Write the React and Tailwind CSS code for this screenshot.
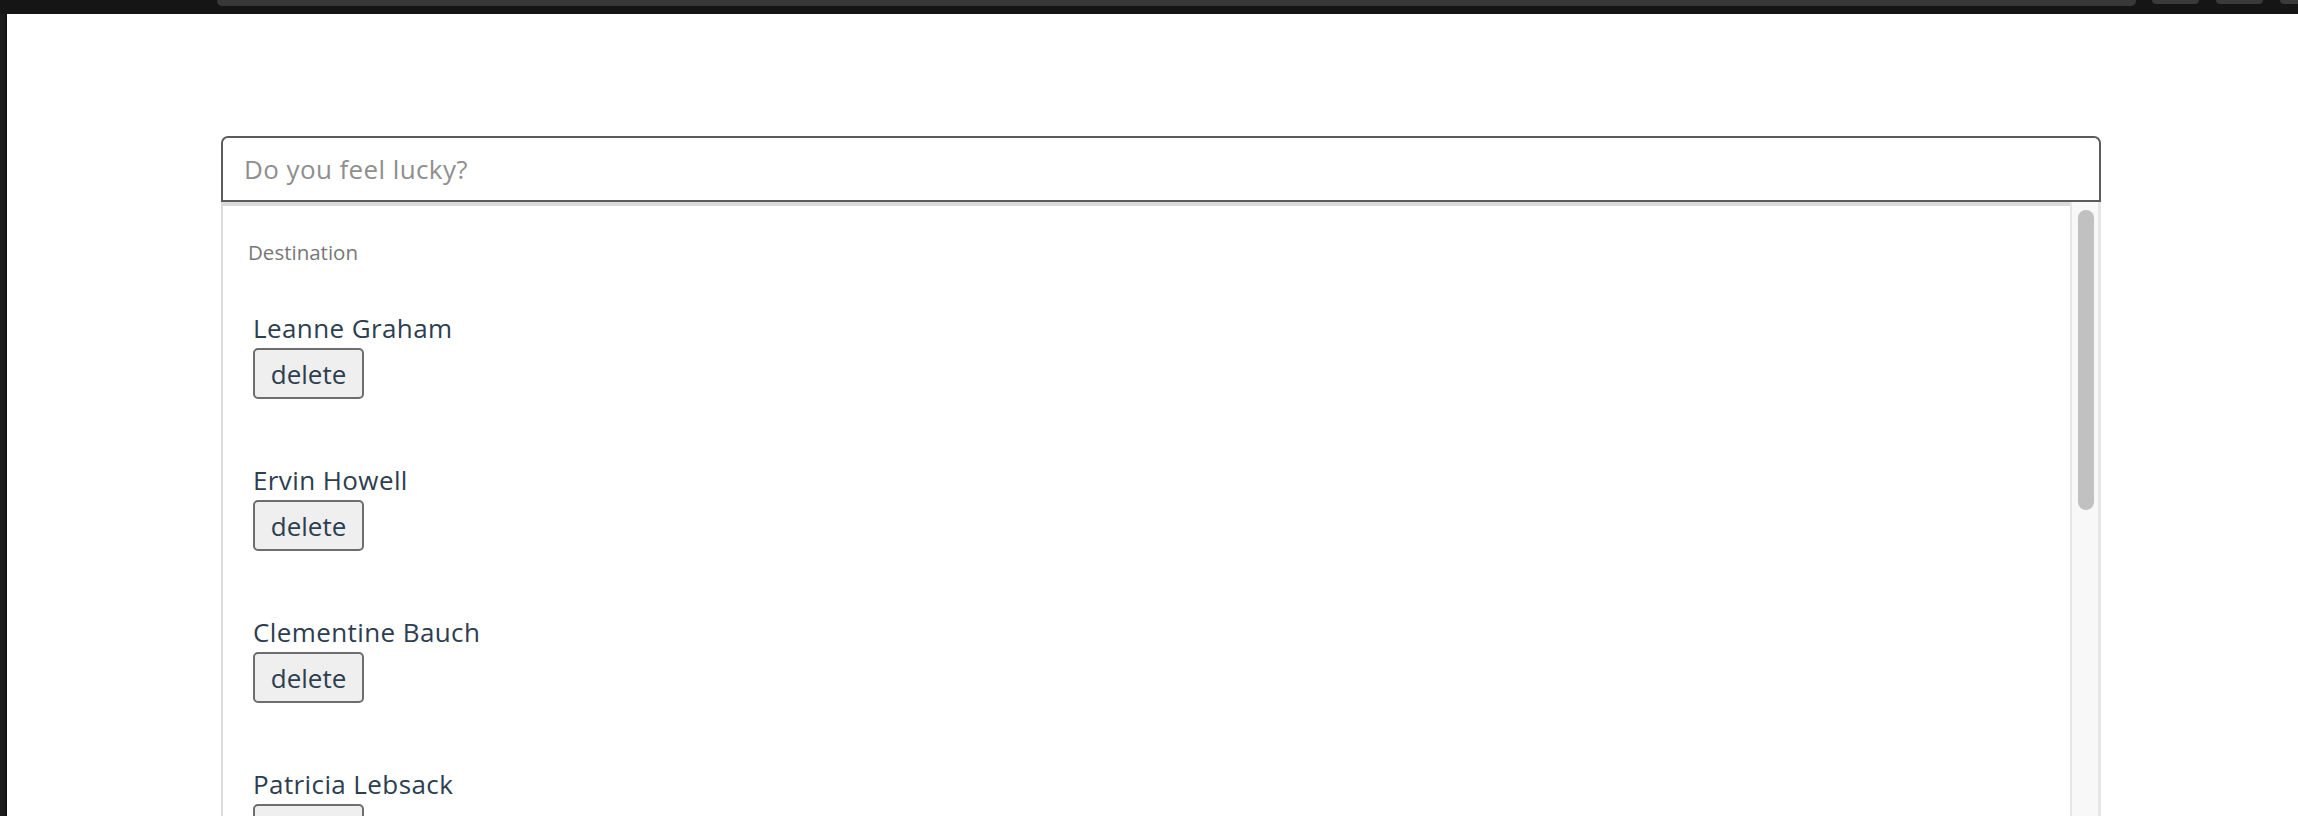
import React, { useState } from 'react';

const users = [
  { id: 1, name: 'Leanne Graham' },
  { id: 2, name: 'Ervin Howell' },
  { id: 3, name: 'Clementine Bauch' },
  { id: 4, name: 'Patricia Lebsack' },
];

// browser chrome strip across the top of the capture
const TopChrome = () => (
  <div className="h-[14px] shrink-0 bg-[#151515] flex items-start">
    <div className="ml-[217px] w-[1919px] h-[6px] rounded-b-[5px] bg-[#383838]" />
    <div className="ml-[16px] w-[47px] h-[4px] rounded-b-[4px] bg-[#3a3a3a]" />
    <div className="ml-[17px] w-[47px] h-[4px] rounded-b-[4px] bg-[#3a3a3a]" />
    <div className="ml-[17px] flex-1 h-[4px] rounded-bl-[4px] bg-[#3a3a3a]" />
  </div>
);

function App() {
  const [query, setQuery] = useState('');
  const [items, setItems] = useState(users);

  const filtered = items.filter((u) => u.name.toLowerCase().includes(query.toLowerCase()));

  return (
    <div
      className="h-screen w-full flex flex-col overflow-hidden bg-white text-[#2c3e50] font-[380]"
      style={{ fontFamily: '"Open Sans", Lato, sans-serif' }}
    >
      <TopChrome />
      <div className="flex flex-1 min-h-0">
        <div className="w-[7px] shrink-0 bg-[#1b1b1b] border-r-2 border-[#111]" />
        <div className="flex-1 min-h-0 pt-[122px] pl-[214px] flex flex-col">
          <div className="w-[1880px] flex flex-col flex-1 min-h-0">
            <input
              value={query}
              onChange={(e) => setQuery(e.target.value)}
              placeholder="Do you feel lucky?"
              className="h-[66px] w-full shrink-0 border-2 border-[#5b5b5b] rounded-t-[7px] px-[21px] text-[26px] tracking-[0.4px] text-[#2c3e50] placeholder:text-[#8f8f8f] outline-none"
            />
            <div className="flex flex-1 min-h-0 border-l-2 border-[#dcdcdc]">
              <div className="flex-1 min-w-0 border-t-[4px] border-[#dadada] overflow-hidden">
                <div className="pt-[31px] pl-[25px] text-[20.5px] leading-[30px] text-[#777]">Destination</div>
                {filtered.map((u) => (
                  <div key={u.id} className="pl-[30px] pt-[43px] pb-[20px]">
                    <div className="text-[26px] leading-[36px] tracking-[0.4px]">{u.name}</div>
                    <button
                      onClick={() => setItems((prev) => prev.filter((x) => x.id !== u.id))}
                      className="mt-[2px] h-[51px] w-[111px] border-2 border-[#6e6e6e] rounded-[5px] bg-[#efefef] text-[26px] leading-none text-[#2c3e50]"
                    >
                      delete
                    </button>
                  </div>
                ))}
              </div>
              {/* scrollbar */}
              <div className="w-[31px] shrink-0 bg-[#f8f8f8] border-l-2 border-r-[3px] border-[#e6e6e6] pt-[8px] pl-[6px]">
                <div className="w-[16px] h-[300px] rounded-full bg-[#c1c1c1]" />
              </div>
            </div>
          </div>
        </div>
      </div>
    </div>
  );
}

export default App;
